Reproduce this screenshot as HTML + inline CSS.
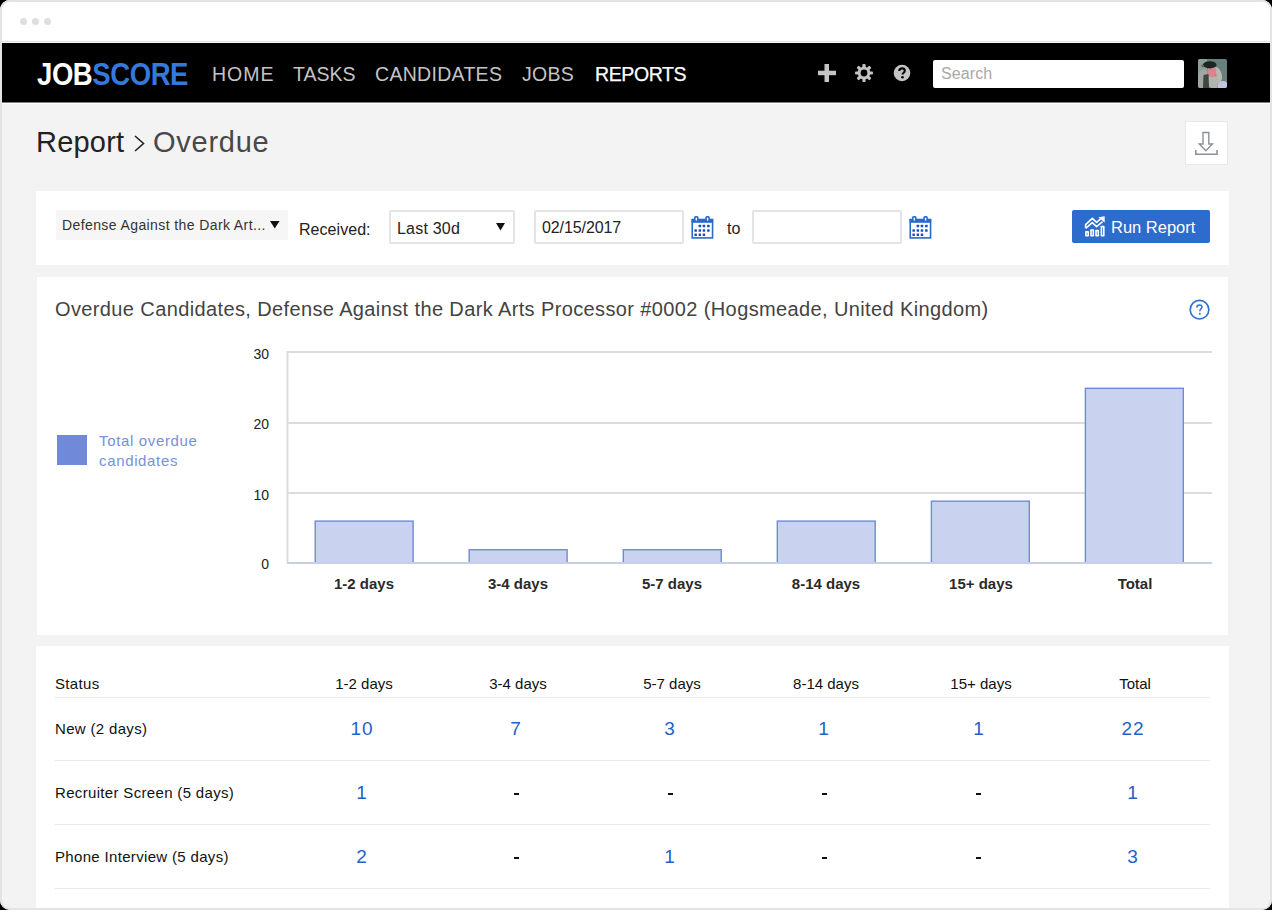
<!DOCTYPE html>
<html><head><meta charset="utf-8">
<style>
*{box-sizing:border-box;margin:0;padding:0}
html,body{width:1272px;height:910px;overflow:hidden;background:#000}
body{font-family:"Liberation Sans",sans-serif;position:relative}
.abs{position:absolute;white-space:nowrap}
#frame{position:absolute;left:0;top:0;width:1272px;height:910px;border-radius:10px;overflow:hidden;background:#f3f3f3}
#border{position:absolute;left:0;top:0;width:1272px;height:910px;border:2px solid #e4e4e4;border-radius:10px;pointer-events:none}
#titlebar{position:absolute;left:0;top:0;width:1272px;height:41px;background:#fff}
.dot{position:absolute;top:18px;width:7px;height:7px;border-radius:50%;background:#dedede}
#tline{position:absolute;left:0;top:41px;width:1272px;height:1px;background:#e4e4e4}
#tline2{position:absolute;left:0;top:42px;width:1272px;height:1px;background:#f6f6f6}
#nav{position:absolute;left:0;top:43px;width:1272px;height:59px;background:#000}
#nline{position:absolute;left:0;top:102px;width:1272px;height:1px;background:#808080;box-shadow:0 1px 0 #fff}
.navi{position:absolute;top:2px;height:59px;line-height:59px;font-size:19.5px;color:#c4c4c4;white-space:nowrap}
.panel{position:absolute;background:#fff}
.lbl{font-size:15px;color:#222;line-height:18px}
.box{position:absolute;border:2px solid #e4e4e4;background:#fff;border-radius:2px}
.yl{position:absolute;font-size:14px;color:#222;text-align:right;width:30px;line-height:14px}
.xl{position:absolute;font-size:15px;font-weight:bold;color:#2a2a2a;text-align:center;width:154px;line-height:18px;margin-top:1px}
.th{position:absolute;font-size:15px;color:#111;text-align:center;width:154px;line-height:18px}
.td{position:absolute;font-size:19px;color:#1f5fcc;text-align:center;width:154px;line-height:20px;letter-spacing:1px;margin-left:-2px}
.dash{position:absolute;width:5px;height:2px;background:#111}
.rl{position:absolute;left:55px;width:1155px;height:1px;background:#eaeaea}
.rn{position:absolute;left:55px;font-size:15px;color:#111;line-height:18px;white-space:nowrap;letter-spacing:0.33px}
</style></head><body>
<div id="frame">
  <div id="titlebar">
    <div class="dot" style="left:20px"></div>
    <div class="dot" style="left:32px"></div>
    <div class="dot" style="left:44px"></div>
  </div>
  <div id="tline"></div><div id="tline2"></div>
  <div id="nav">
    <div class="abs" id="logo" style="left:37px;top:2px;height:59px;line-height:59px;font-size:32px;font-weight:bold;letter-spacing:-0.5px;transform-origin:0 0;transform:scaleX(0.86)"><span style="color:#fff">JOB</span><span style="color:#3479dc">SCORE</span></div>
    <div class="navi" id="n1" style="left:212px;letter-spacing:1px">HOME</div>
    <div class="navi" id="n2" style="left:293px">TASKS</div>
    <div class="navi" id="n3" style="left:375px;letter-spacing:0.3px">CANDIDATES</div>
    <div class="navi" id="n4" style="left:522px;letter-spacing:0.3px">JOBS</div>
    <div class="navi" id="n5" style="left:595px;color:#fff;letter-spacing:-0.4px;-webkit-text-stroke:0.25px #fff">REPORTS</div>
    <!-- plus -->
    <svg class="abs" style="left:818px;top:21px" width="18" height="18" viewBox="0 0 18 18"><rect x="6.5" y="0" width="4.5" height="18" fill="#c4c4c4"/><rect x="0" y="6.7" width="18" height="4.5" fill="#c4c4c4"/></svg>
    <!-- gear -->
    <svg class="abs" style="left:855px;top:21px" width="18" height="18" viewBox="0 0 18 18">
      <g fill="#c4c4c4" transform="translate(9 9)">
        <circle r="6.3"/>
        <rect x="-1.6" y="-9" width="3.2" height="18" rx="1"/>
        <rect x="-1.6" y="-9" width="3.2" height="18" rx="1" transform="rotate(45)"/>
        <rect x="-1.6" y="-9" width="3.2" height="18" rx="1" transform="rotate(90)"/>
        <rect x="-1.6" y="-9" width="3.2" height="18" rx="1" transform="rotate(135)"/>
      </g>
      <circle cx="9" cy="9" r="3.4" fill="#000"/>
    </svg>
    <!-- help -->
    <svg class="abs" style="left:893px;top:21px" width="18" height="18" viewBox="0 0 18 18">
      <circle cx="9" cy="9" r="8.3" fill="#c4c4c4"/>
      <path d="M6.3 7.1 C6.3 5.2 7.6 4.4 9.1 4.4 C10.7 4.4 11.8 5.4 11.8 6.8 C11.8 8.6 9.6 8.8 9.6 10.4" fill="none" stroke="#000" stroke-width="2.1"/>
      <circle cx="9.5" cy="13.2" r="1.3" fill="#000"/>
    </svg>
    <div class="abs" id="search" style="left:933px;top:17px;width:251px;height:28px;background:#fff;border-radius:2px;font-size:16px;color:#a8a8a8;line-height:27px;padding-left:8px;letter-spacing:0.1px">Search</div>
    <!-- avatar -->
    <svg class="abs" style="left:1198px;top:16px" width="29" height="29" viewBox="0 0 29 29">
      <defs><clipPath id="av"><rect width="29" height="29" rx="2"/></clipPath></defs>
      <g clip-path="url(#av)">
        <rect width="29" height="29" fill="#67807c"/>
        <rect x="0" y="0" width="9" height="20" fill="#89a09c"/>
        <path d="M0 29 L0 17 C1 12 4 10 8 11 L10 16 L9 29 Z" fill="#a3a5a0"/>
        <path d="M17 8 C21 8 24 13 24 18 C24 22 22 24 20 24 L18 14 Z" fill="#b9b9b4"/>
        <ellipse cx="13.8" cy="12.8" rx="4.6" ry="6.6" fill="#d9878f"/>
        <path d="M9 16 C9 22 10 29 14 29 L19 29 C20 24 21 19 20 15 C18 19 11 19 9 16 Z" fill="#b3b4ae"/>
        <path d="M5.5 16 L10.5 15 L11 29 L5 29 Z" fill="#3e4644"/>
        <ellipse cx="11.8" cy="5.8" rx="6.8" ry="3.6" fill="#1c2624"/>
        <path d="M3 6.5 C3.5 5 5 5 5.8 6.5 L5 9 Z" fill="#7a5b3c"/>
        <ellipse cx="25" cy="27" rx="5.5" ry="5" fill="#c6c3dd"/>
      </g>
    </svg>
  </div>
  <div id="nline"></div>

  <div class="abs" id="t1" style="left:36px;letter-spacing:0.2px;top:125px;font-size:29px;color:#222;line-height:34px">Report</div>
  <svg class="abs" style="left:134px;top:135px" width="11" height="17" viewBox="0 0 11 17"><path d="M1 1 L9.5 8.5 L1 16" fill="none" stroke="#222" stroke-width="1.6"/></svg>
  <div class="abs" id="t2" style="left:153px;letter-spacing:0.74px;top:125px;font-size:29px;color:#484848;line-height:34px">Overdue</div>

  <!-- download -->
  <div class="abs" style="left:1185px;top:121px;width:43px;height:44px;background:#fff;border:1px solid #e8e8e8;border-radius:1px"></div>
  <svg class="abs" style="left:1194.3px;top:131.3px" width="25" height="25" viewBox="0 0 25 25">
    <path d="M9 1.5 L14.8 1.5 L14.8 13 L18.5 13 L11.9 19.7 L5.3 13 L9 13 Z" fill="none" stroke="#8c9096" stroke-width="1.4" stroke-linejoin="miter"/>
    <path d="M1.8 19 L1.8 23.2 L23 23.2 L23 19" fill="none" stroke="#8c9096" stroke-width="1.6"/>
  </svg>

  <!-- filter panel -->
  <div class="panel" style="left:36px;top:191px;width:1193px;height:74px"></div>
  <div class="abs" style="left:56px;top:210px;width:232px;height:30px;background:#f6f6f6"></div>
  <div class="abs" id="f1" style="left:62px;top:216.7px;letter-spacing:0.4px;font-size:14px;color:#333;line-height:17px">Defense Against the Dark Art...</div>
  <svg class="abs" style="left:270px;top:221px" width="10" height="8" viewBox="0 0 10 8"><path d="M0 0 L9.5 0 L4.75 7.5 Z" fill="#111"/></svg>
  <div class="abs lbl" id="f2" style="left:299px;top:220.5px;letter-spacing:0.05px;font-size:16px">Received:</div>
  <div class="box" style="left:389px;top:210px;width:126px;height:34px"></div>
  <div class="abs lbl" id="f3" style="left:397px;top:219.5px;letter-spacing:0.2px;font-size:16px">Last 30d</div>
  <svg class="abs" style="left:496px;top:223px" width="10" height="8" viewBox="0 0 10 8"><path d="M0 0 L9 0 L4.5 7.5 Z" fill="#111"/></svg>
  <div class="box" style="left:534px;top:210px;width:150px;height:34px"></div>
  <div class="abs lbl" id="f4" style="left:542px;top:219px;letter-spacing:-0.1px;font-size:16px">02/15/2017</div>
  <svg class="abs cal" style="left:691px;top:215px" width="23" height="25" viewBox="0 0 23 25">
    <rect x="1.25" y="4.6" width="20.3" height="18.3" fill="none" stroke="#2a6acb" stroke-width="1.6"/>
    <rect x="0.6" y="3.9" width="21.6" height="3.9" fill="#2a6acb"/>
    <rect x="3" y="1.1" width="4.6" height="5" rx="1.6" fill="#2a6acb"/>
    <rect x="14.3" y="1.1" width="4.6" height="5" rx="1.6" fill="#2a6acb"/>
    <rect x="4.6" y="2.4" width="1.4" height="3.4" rx="0.7" fill="#fff"/>
    <rect x="15.9" y="2.4" width="1.4" height="3.4" rx="0.7" fill="#fff"/>
    <g fill="#1a4fc0">
      <rect x="7.6" y="9.8" width="2.5" height="2.5" rx="0.5"/><rect x="11.7" y="9.8" width="2.5" height="2.5" rx="0.5"/><rect x="16.1" y="9.8" width="2.5" height="2.5" rx="0.5"/>
      <rect x="3.4" y="14.3" width="2.5" height="2.5" rx="0.5"/><rect x="7.6" y="14.3" width="2.5" height="2.5" rx="0.5"/><rect x="11.7" y="14.3" width="2.5" height="2.5" rx="0.5"/><rect x="16.1" y="14.3" width="2.5" height="2.5" rx="0.5"/>
      <rect x="3.4" y="18.4" width="2.5" height="2.5" rx="0.5"/><rect x="7.6" y="18.4" width="2.5" height="2.5" rx="0.5"/><rect x="11.7" y="18.4" width="2.5" height="2.5" rx="0.5"/>
    </g>
  </svg>
  <div class="abs lbl" id="f5" style="left:727px;top:220px;font-size:16px">to</div>
  <div class="box" style="left:752px;top:210px;width:150px;height:34px"></div>
  <svg class="abs cal" style="left:909px;top:215px" width="23" height="25" viewBox="0 0 23 25">
    <rect x="1.25" y="4.6" width="20.3" height="18.3" fill="none" stroke="#2a6acb" stroke-width="1.6"/>
    <rect x="0.6" y="3.9" width="21.6" height="3.9" fill="#2a6acb"/>
    <rect x="3" y="1.1" width="4.6" height="5" rx="1.6" fill="#2a6acb"/>
    <rect x="14.3" y="1.1" width="4.6" height="5" rx="1.6" fill="#2a6acb"/>
    <rect x="4.6" y="2.4" width="1.4" height="3.4" rx="0.7" fill="#fff"/>
    <rect x="15.9" y="2.4" width="1.4" height="3.4" rx="0.7" fill="#fff"/>
    <g fill="#1a4fc0">
      <rect x="7.6" y="9.8" width="2.5" height="2.5" rx="0.5"/><rect x="11.7" y="9.8" width="2.5" height="2.5" rx="0.5"/><rect x="16.1" y="9.8" width="2.5" height="2.5" rx="0.5"/>
      <rect x="3.4" y="14.3" width="2.5" height="2.5" rx="0.5"/><rect x="7.6" y="14.3" width="2.5" height="2.5" rx="0.5"/><rect x="11.7" y="14.3" width="2.5" height="2.5" rx="0.5"/><rect x="16.1" y="14.3" width="2.5" height="2.5" rx="0.5"/>
      <rect x="3.4" y="18.4" width="2.5" height="2.5" rx="0.5"/><rect x="7.6" y="18.4" width="2.5" height="2.5" rx="0.5"/><rect x="11.7" y="18.4" width="2.5" height="2.5" rx="0.5"/>
    </g>
  </svg>
  <div class="abs" style="left:1072px;top:210px;width:138px;height:33px;background:#2d6bcc;border-radius:2px"></div>
  <svg class="abs" style="left:1084px;top:215px" width="22" height="22" viewBox="0 0 22 22">
    <g fill="none" stroke="#fff" stroke-width="1.6" stroke-linejoin="round">
      <path d="M1.6 13.3 L1.6 9.6 L8.3 3.4 L12.6 7.3 L17.2 3.4 M18.6 6.6 L12.6 11.6 L8.3 7.7 L1.6 13.3"/>
      <rect x="1.9" y="16.9" width="2.3" height="3.9"/>
      <rect x="7" y="15" width="2.3" height="5.8"/>
      <rect x="12" y="15.6" width="2.3" height="5.2"/>
      <rect x="17.4" y="11.6" width="2.4" height="9.2"/>
    </g>
    <path d="M14.3 2.3 L20.7 1.2 L20.7 7.4 Z" fill="#fff"/>
  </svg>
  <div class="abs" id="f6" style="left:1111px;top:217px;font-size:16.5px;color:#fff;line-height:20px">Run Report</div>

  <!-- chart panel -->
  <div class="panel" style="left:37px;top:277px;width:1191px;height:357.5px"></div>
  <div class="abs" id="c1" style="left:55px;top:297px;letter-spacing:0.38px;font-size:20px;color:#434343;line-height:24px">Overdue Candidates, Defense Against the Dark Arts Processor #0002 (Hogsmeade, United Kingdom)</div>
  <svg class="abs" style="left:1188px;top:298px" width="23" height="23" viewBox="0 0 23 23">
    <circle cx="11.5" cy="11.7" r="9.3" fill="none" stroke="#2e6fcf" stroke-width="1.6"/>
    <path d="M8.9 9.4 C8.9 7.7 10 6.9 11.5 6.9 C13 6.9 14 7.8 14 9.1 C14 10.7 11.8 11 11.8 13.3" fill="none" stroke="#2e6fcf" stroke-width="1.5"/>
    <circle cx="11.8" cy="15.8" r="1" fill="#2e6fcf"/>
  </svg>
  <div class="abs" style="left:57px;top:435px;width:30px;height:30px;background:#7089d9"></div>
  <div class="abs" id="c2" style="left:99px;top:431px;letter-spacing:0.65px;font-size:15px;color:#7691db;line-height:20px">Total overdue<br>candidates</div>

  <svg class="abs" style="left:0;top:0" width="1272" height="910" viewBox="0 0 1272 910">
    <g stroke="#dcdcdc" stroke-width="2">
      <line x1="287" y1="352" x2="1212" y2="352"/>
      <line x1="287" y1="423" x2="1212" y2="423"/>
      <line x1="287" y1="493" x2="1212" y2="493"/>
      <line x1="287.5" y1="351" x2="287.5" y2="563"/>
    </g>
    <g fill="#c9d3ef" stroke="#6f8ad9" stroke-width="1.4">
      <rect x="315.2" y="521.1" width="97.9" height="41.9"/>
      <rect x="469.2" y="549.7" width="97.9" height="13.3"/>
      <rect x="623.3" y="549.7" width="97.9" height="13.3"/>
      <rect x="777.3" y="521.1" width="97.9" height="41.9"/>
      <rect x="931.4" y="501.2" width="97.9" height="61.8"/>
      <rect x="1085.4" y="388.3" width="97.9" height="174.7"/>
    </g>
    <line x1="287" y1="563" x2="1212" y2="563" stroke="#c5d0e6" stroke-width="2"/>
  </svg>
  <div class="yl" style="left:239px;top:347px">30</div>
  <div class="yl" style="left:239px;top:417px">20</div>
  <div class="yl" style="left:239px;top:488px">10</div>
  <div class="yl" style="left:239px;top:557px">0</div>
  <div class="xl" style="left:287px;top:574px">1-2 days</div>
  <div class="xl" style="left:441px;top:574px">3-4 days</div>
  <div class="xl" style="left:595px;top:574px">5-7 days</div>
  <div class="xl" style="left:749px;top:574px">8-14 days</div>
  <div class="xl" style="left:904px;top:574px">15+ days</div>
  <div class="xl" style="left:1058px;top:574px">Total</div>

  <!-- table panel -->
  <div class="panel" style="left:36px;top:646px;width:1193px;height:300px"></div>
  <div class="rn" id="r0" style="top:675px">Status</div>
  <div class="th" style="left:287px;top:675px">1-2 days</div>
  <div class="th" style="left:441px;top:675px">3-4 days</div>
  <div class="th" style="left:595px;top:675px">5-7 days</div>
  <div class="th" style="left:749px;top:675px">8-14 days</div>
  <div class="th" style="left:904px;top:675px">15+ days</div>
  <div class="th" style="left:1058px;top:675px">Total</div>
  <div class="rl" style="top:697px"></div>

  <div class="rn" id="r1" style="top:720px">New (2 days)</div>
  <div class="td" style="left:287px;top:719px">10</div>
  <div class="td" style="left:441px;top:719px">7</div>
  <div class="td" style="left:595px;top:719px">3</div>
  <div class="td" style="left:749px;top:719px">1</div>
  <div class="td" style="left:904px;top:719px">1</div>
  <div class="td" style="left:1058px;top:719px">22</div>
  <div class="rl" style="top:760px"></div>

  <div class="rn" id="r2" style="top:784px">Recruiter Screen (5 days)</div>
  <div class="td" style="left:287px;top:783px">1</div>
  <div class="dash" style="left:514px;top:793px"></div>
  <div class="dash" style="left:668px;top:793px"></div>
  <div class="dash" style="left:822px;top:793px"></div>
  <div class="dash" style="left:976px;top:793px"></div>
  <div class="td" style="left:1058px;top:783px">1</div>
  <div class="rl" style="top:824px"></div>

  <div class="rn" id="r3" style="top:848px">Phone Interview (5 days)</div>
  <div class="td" style="left:287px;top:847px">2</div>
  <div class="dash" style="left:514px;top:857px"></div>
  <div class="td" style="left:595px;top:847px">1</div>
  <div class="dash" style="left:822px;top:857px"></div>
  <div class="dash" style="left:976px;top:857px"></div>
  <div class="td" style="left:1058px;top:847px">3</div>
  <div class="rl" style="top:888px"></div>
</div>
<div id="border"></div>
</body></html>
